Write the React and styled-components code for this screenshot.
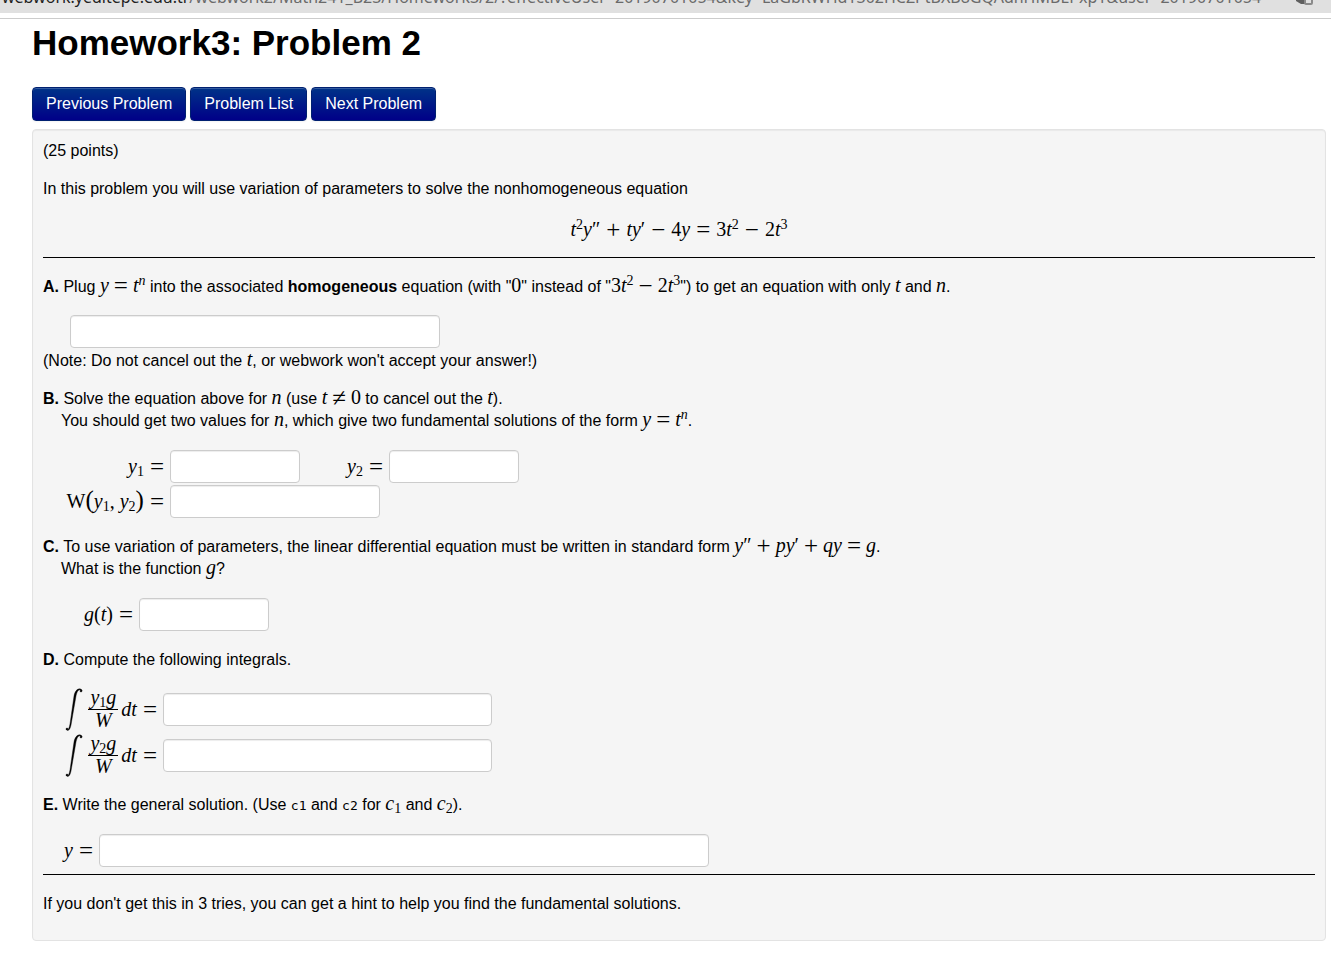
import styled, { createGlobalStyle } from "styled-components";

/*
WeBWorK problem page: address strip, problem navigation and the problem body.
*/

function App() {
  return (
    <>
      <GlobalStyle />
      <Browser.Strip>
        <Browser.Url>
          <b>webwork.yeditepe.edu.tr</b>/webwork2/Math241_B23/Homework3/2/?effectiveUser=20190701054&amp;key=LaGbRWHd1302HCZPtBXB8GQAdnHMBEPxp1&amp;user=20190701054
        </Browser.Url>
        <Browser.Icon viewBox="0 0 20 16" aria-hidden="true">
          <path d="M1 8h10v7H6L1 12z" fill="#5f5f5f" />
          <rect x="10" y="5" width="7" height="10" rx="1" fill="#e0e0e0" stroke="#8a8a8a" strokeWidth="2" />
        </Browser.Icon>
      </Browser.Strip>
      <Page.Wrapper>
        <Page.Title>Homework3: Problem 2</Page.Title>
        <Page.Nav>
          <Page.NavButton type="button">Previous Problem</Page.NavButton>
          <Page.NavButton type="button">Problem List</Page.NavButton>
          <Page.NavButton type="button">Next Problem</Page.NavButton>
        </Page.Nav>
        <Problem.Body>
          <Problem.Text>(25 points)</Problem.Text>
          <Problem.Text>
            In this problem you will use variation of parameters to solve the nonhomogeneous equation
          </Problem.Text>
          <MathText.Display>
            <i>t</i><sup>2</sup><i>y</i>″<MathText.Op>+</MathText.Op>
            <i>ty</i>′<MathText.Op>−</MathText.Op>
            4<i>y</i><MathText.Op>=</MathText.Op>
            3<i>t</i><sup>2</sup><MathText.Op>−</MathText.Op>2<i>t</i><sup>3</sup>
          </MathText.Display>
          <Problem.Rule />
          <Problem.Text>
            <b>A.</b> Plug <MathText.Inline><i>y</i><MathText.Op>=</MathText.Op><i>t</i><sup><i>n</i></sup></MathText.Inline> into the associated{" "}
            <b>homogeneous</b> equation (with "<MathText.Inline>0</MathText.Inline>" instead of "
            <MathText.Inline>3<i>t</i><sup>2</sup><MathText.Op>−</MathText.Op>2<i>t</i><sup>3</sup></MathText.Inline>") to get an equation with
            only <MathText.Inline><i>t</i></MathText.Inline> and <MathText.Inline><i>n</i></MathText.Inline>.
          </Problem.Text>
          <Answer.Single>
            <Answer.Input $width={370} aria-label="Answer for part A" />
          </Answer.Single>
          <Problem.Text>
            (Note: Do not cancel out the <MathText.Inline><i>t</i></MathText.Inline>, or webwork won't accept your answer!)
          </Problem.Text>
          <Problem.Text>
            <b>B.</b> Solve the equation above for <MathText.Inline><i>n</i></MathText.Inline> (use{" "}
            <MathText.Inline><i>t</i><MathText.Op>≠</MathText.Op>0</MathText.Inline> to cancel out the <MathText.Inline><i>t</i></MathText.Inline>).
            <Problem.Indented>
              You should get two values for <MathText.Inline><i>n</i></MathText.Inline>, which give two fundamental
              solutions of the form <MathText.Inline><i>y</i><MathText.Op>=</MathText.Op><i>t</i><sup><i>n</i></sup></MathText.Inline>.
            </Problem.Indented>
          </Problem.Text>
          <Answer.Group>
            <Answer.Row>
              <Answer.Label htmlFor="y1" $width={127}><i>y</i><sub>1</sub><MathText.Op>=</MathText.Op></Answer.Label>
              <Answer.Input id="y1" $width={130} />
              <Answer.Label htmlFor="y2" $width={89}><i>y</i><sub>2</sub><MathText.Op>=</MathText.Op></Answer.Label>
              <Answer.Input id="y2" $width={130} />
            </Answer.Row>
            <Answer.Row>
              <Answer.Label htmlFor="wronskian" $width={127}>
                W<MathText.Paren>(</MathText.Paren><i>y</i><sub>1</sub>, <i>y</i><sub>2</sub><MathText.Paren>)</MathText.Paren><MathText.Op>=</MathText.Op>
              </Answer.Label>
              <Answer.Input id="wronskian" $width={210} />
            </Answer.Row>
          </Answer.Group>
          <Problem.Text>
            <b>C.</b> To use variation of parameters, the linear differential equation must be written in standard
            form <MathText.Inline>
              <i>y</i>″<MathText.Op>+</MathText.Op>
              <i>py</i>′<MathText.Op>+</MathText.Op>
              <i>qy</i><MathText.Op>=</MathText.Op><i>g</i>
            </MathText.Inline>.
            <Problem.Indented>
              What is the function <MathText.Inline><i>g</i></MathText.Inline>?
            </Problem.Indented>
          </Problem.Text>
          <Answer.Group>
            <Answer.Row>
              <Answer.Label htmlFor="gt" $width={96}><i>g</i>(<i>t</i>)<MathText.Op>=</MathText.Op></Answer.Label>
              <Answer.Input id="gt" $width={130} />
            </Answer.Row>
          </Answer.Group>
          <Problem.Text><b>D.</b> Compute the following integrals.</Problem.Text>
          <Answer.IntegralGroup>
            <IntegralRow id="int1" index={1} />
            <IntegralRow id="int2" index={2} />
          </Answer.IntegralGroup>
          <Problem.Text>
            <b>E.</b> Write the general solution. (Use <Problem.Code>c1</Problem.Code> and <Problem.Code>c2</Problem.Code>{" "}
            for <MathText.Inline><i>c</i><sub>1</sub></MathText.Inline> and{" "}
            <MathText.Inline><i>c</i><sub>2</sub></MathText.Inline>).
          </Problem.Text>
          <Answer.LastGroup>
            <Answer.Row>
              <Answer.Label htmlFor="general" $width={56}><i>y</i><MathText.Op>=</MathText.Op></Answer.Label>
              <Answer.Input id="general" $width={610} />
            </Answer.Row>
          </Answer.LastGroup>
          <Problem.Rule />
          <Problem.Text>
            If you don't get this in 3 tries, you can get a hint to help you find the fundamental solutions.
          </Problem.Text>
        </Problem.Body>
      </Page.Wrapper>
    </>
  );
}

function IntegralRow({ id, index }) {
  return (
    <Answer.IntegralRow>
      <Answer.FractionLabel htmlFor={id} $width={120}>
        <MathText.Integral viewBox="0 0 18 44" aria-hidden="true">
          <path d="M1 41C3 44 5 42 6 37L11 8C12 3 14 0 17 3L17 2C14 -1 10 2 9 8L5 36C4 41 3 43 1 41Z" />
          <circle cx="2" cy="41" r="1" />
          <circle cx="16" cy="3" r="1" />
        </MathText.Integral>
        <MathText.Fraction>
          <span><i>y</i><sub>{index}</sub><i>g</i></span>
          <span><i>W</i></span>
        </MathText.Fraction>
        <span><i>dt</i><MathText.Op>=</MathText.Op></span>
      </Answer.FractionLabel>
      <Answer.Input id={id} $width={329} />
    </Answer.IntegralRow>
  );
}

const GlobalStyle = createGlobalStyle`
  body {
    margin: 0;
    background: #fff;
    color: #000;
    font-family: "Liberation Sans", Arial, sans-serif;
    font-size: 16px;
    line-height: 22px;
  }
`

const Browser = {
  Strip: styled.div`
    display: flex;
    align-items: flex-end;
    justify-content: space-between;
    height: 13px;
    padding: 0 16px 0 2px;
    background: #e0e0e0;
    overflow: hidden;
  `,
  Url: styled.div`
    padding-bottom: 5px;
    font-family: "Noto Sans", "Open Sans", sans-serif;
    font-size: 16px;
    white-space: nowrap;
    color: #6a6a6a;
    b {
      font-weight: 400;
      color: #222;
    }
  `,
  Icon: styled.svg`
    flex: none;
    width: 20px;
    height: 16px;
    margin-bottom: 8px;
  `
}

const Page = {
  Wrapper: styled.main`
    margin-top: 5px;
    padding: 0 5px 18px 32px;
    border-top: 1px solid #ccc;
  `,
  Title: styled.h1`
    margin: 0;
    padding: 4px 0 24px;
    font-size: 35px;
    line-height: 40px;
  `,
  Nav: styled.nav`
    display: flex;
    gap: 4px;
    margin-bottom: 8px;
  `,
  NavButton: styled.button`
    height: 34px;
    padding: 0 13px;
    border: 1px solid #002070;
    border-radius: 4px;
    background: linear-gradient(#003388, #000088);
    box-shadow: inset 0 1px 0 rgba(255, 255, 255, 0.2), 0 1px 2px rgba(0, 0, 0, 0.05);
    color: #fff;
    font: inherit;
  `
}

const Problem = {
  Body: styled.section`
    padding: 10px 10px 9px;
    border: 1px solid #e3e3e3;
    border-radius: 4px;
    background: #f5f5f5;
    box-shadow: inset 0 1px 1px rgba(0, 0, 0, 0.05);
  `,
  Text: styled.div`
    margin-bottom: 16px;
  `,
  Indented: styled.div`
    padding-left: 18px;
  `,
  Rule: styled.hr`
    margin: 0 0 18px;
    border: 0;
    border-top: 1px solid #000;
  `,
  Code: styled.code`
    font-family: "DejaVu Sans Mono", monospace;
    font-size: 13px;
  `
}

const mathFont = `
  font-family: "Liberation Serif", "Times New Roman", serif;
  font-size: 20px;
  line-height: 22px;
  sup, sub {
    font-size: 14px;
    line-height: 0;
  }
  sup {
    vertical-align: 7px;
  }
  sub {
    vertical-align: -3px;
  }
`

const Op = styled.span`
  margin: 0 5px;
  font-size: 25px;
  line-height: 0;
  vertical-align: -2px;
  label & {
    margin: 0 0 0 6px;
  }
`

const MathText = {
  Op,
  Inline: styled.span`
    ${mathFont}
    line-height: 0;
    white-space: nowrap;
  `,
  Display: styled.div`
    ${mathFont}
    padding: 2px 0 17px;
    text-align: center;
    ${Op} {
      margin: 0 6px;
    }
  `,
  Paren: styled.span`
    font-size: 25px;
    line-height: 0;
  `,
  Integral: styled.svg`
    width: 18px;
    height: 44px;
    fill: #000;
    stroke: #000;
    stroke-width: 0.4;
  `,
  Fraction: styled.span`
    display: flex;
    flex-direction: column;
    text-align: center;
    margin: 0 3px 0 5px;
    span:first-child {
      padding: 0 2px 2px;
      border-bottom: 1px solid #000;
      line-height: 19px;
    }
    span:last-child {
      line-height: 21px;
    }
  `
}

const Label = styled.label`
  ${mathFont}
  box-sizing: border-box;
  flex: none;
  width: ${props => props.$width}px;
  padding-right: 6px;
  line-height: 33px;
  text-align: right;
  white-space: nowrap;
`

const Group = styled.div`
  display: flex;
  flex-direction: column;
  gap: 1px;
  padding-top: 2px;
  margin-bottom: 17px;
`

const Row = styled.div`
  display: flex;
  height: 34px;
`

const Answer = {
  Label,
  FractionLabel: styled(Label)`
    display: flex;
    align-items: center;
    justify-content: flex-end;
  `,
  Single: styled.div`
    padding: 1px 0 2px 27px;
  `,
  Group,
  IntegralGroup: styled(Group)`
    gap: 3px;
    padding-top: 1px;
  `,
  LastGroup: styled(Group)`
    padding-top: 1px;
    margin-bottom: 6px;
  `,
  Row,
  IntegralRow: styled(Row)`
    align-items: center;
    height: 43px;
  `,
  Input: styled.input.attrs({ type: "text" })`
    box-sizing: border-box;
    display: block;
    width: ${props => props.$width}px;
    max-width: 100%;
    height: 33px;
    padding: 4px 6px;
    border: 1px solid #ccc;
    border-radius: 4px;
    background: #fff;
    box-shadow: inset 0 1px 1px rgba(0, 0, 0, 0.075);
    font: inherit;
  `
}

export default App;
